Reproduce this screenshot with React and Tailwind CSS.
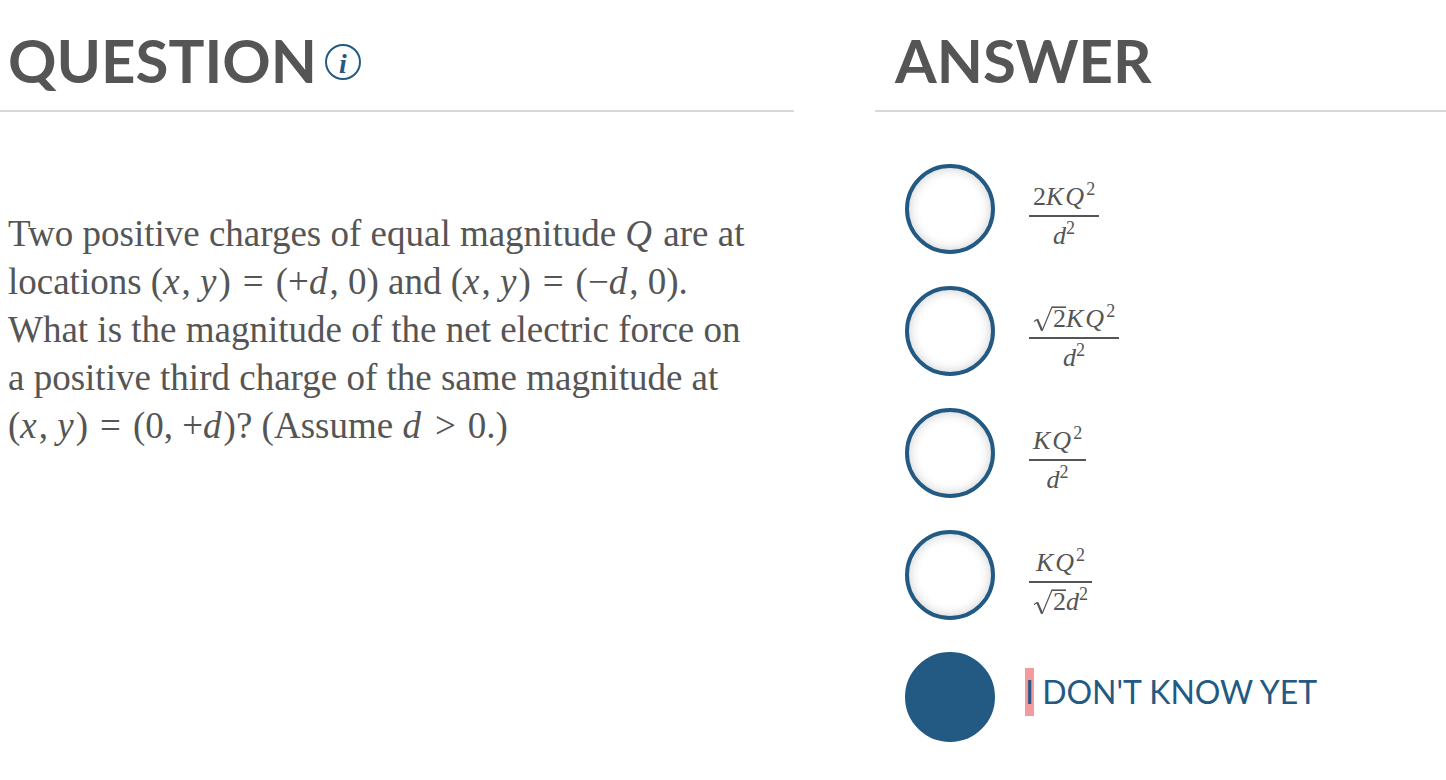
import { useState } from 'react';

const Var = ({ children }) => <i className="mr-0.5">{children}</i>;

const Rel = ({ children }) => <span className="mx-3">{children}</span>;

const Squared = () => <span className="relative bottom-2.5 text-lg leading-none">2</span>;

const RootTwo = () => (
  <span className="relative inline-block pl-5">
    <svg viewBox="0 0 33 26" className="absolute left-0 top-1 h-[26px] w-[33px]" fill="none" stroke="currentColor" aria-hidden="true">
      <path d="M1 15.5 4.5 13.2" strokeWidth="1.2" />
      <path d="M4.3 13.4 9 24.5" strokeWidth="2.2" />
      <path d="M9 25 19 1" strokeWidth="1.2" />
      <path d="M18.6 1.2H33" strokeWidth="1.6" />
    </svg>
    2
  </span>
);

const KQSquared = () => (
  <>
    <Var>K</Var>
    <Var>Q</Var>
    <Squared />
  </>
);

const DSquared = () => (
  <>
    <i>d</i>
    <Squared />
  </>
);

const Fraction = ({ top, bottom }) => (
  <span className="ml-1 flex flex-col text-center font-['Liberation_Serif',serif] text-[26px] leading-[34px] text-[#555]">
    <span className="flex items-baseline justify-center border-b-2 border-[#555] px-1 pb-px">{top}</span>
    <span className="flex items-baseline justify-center px-1 pt-0.5">{bottom}</span>
  </span>
);

const answers = [
  { id: 'a', label: <Fraction top={<>2<KQSquared /></>} bottom={<DSquared />} /> },
  { id: 'b', label: <Fraction top={<><RootTwo /><KQSquared /></>} bottom={<DSquared />} /> },
  { id: 'c', label: <Fraction top={<KQSquared />} bottom={<DSquared />} /> },
  { id: 'd', label: <Fraction top={<KQSquared />} bottom={<><RootTwo /><DSquared /></>} /> },
  {
    id: 'unknown',
    label: (
      <span className="text-[32px] leading-[48px] text-[#235a83]">
        <mark className="inline-block bg-[#f49a9e] text-[#235a83]">I</mark> DON'T KNOW YET
      </span>
    ),
  },
];

const Heading = ({ children, id, className }) => (
  <h2 id={id} className={`flex items-center gap-2 border-b-2 border-[#d8d8d8] pt-6 pb-3.5 text-[60px] leading-[72px] font-bold ${className}`}>
    {children}
  </h2>
);

const App = () => {
  const [selected, setSelected] = useState('unknown');

  return (
    <main className="grid min-h-screen grid-cols-[794fr_571fr] gap-[81px] bg-white font-[Lato,sans-serif] text-[#555]">
      <section>
        <Heading className="pl-2">
          QUESTION
          <button
            type="button"
            aria-label="Question information"
            className="mt-1 flex size-9 items-center justify-center rounded-full border-2 border-[#235a83] pt-1 font-['Liberation_Serif',serif] text-[28px] leading-none font-bold text-[#235a83] italic"
          >
            i
          </button>
        </Heading>

        <p className="pt-[98px] pl-2 font-['Liberation_Serif',serif] text-[37px] leading-[48px] whitespace-nowrap">
          Two positive charges of equal magnitude <Var>Q</Var> are at
          <br />
          locations (<Var>x</Var>, <Var>y</Var>)<Rel>=</Rel>(+<Var>d</Var>, 0) and (<Var>x</Var>, <Var>y</Var>)<Rel>=</Rel>(−<Var>d</Var>, 0).
          <br />
          What is the magnitude of the net electric force on
          <br />
          a positive third charge of the same magnitude at
          <br />
          (<Var>x</Var>, <Var>y</Var>)<Rel>=</Rel>(0, +<Var>d</Var>)? (Assume <Var>d</Var><Rel>&gt;</Rel>0.)
        </p>
      </section>

      <section>
        <Heading id="answer-heading" className="pl-5">ANSWER</Heading>

        <fieldset aria-labelledby="answer-heading" className="flex flex-col gap-8 pt-13 pl-[30px]">
          {answers.map(({ id, label }) => (
            <label key={id} className="flex h-[90px] cursor-pointer items-start gap-[30px]">
              <input
                type="radio"
                name="answer"
                value={id}
                checked={selected === id}
                onChange={() => setSelected(id)}
                className="size-[90px] shrink-0 appearance-none rounded-full border-4 border-[#235a83] bg-white shadow-[inset_0_0_12px_rgba(0,0,0,0.2)] checked:bg-[#235a83] checked:shadow-none"
              />
              <span className="pt-4">{label}</span>
            </label>
          ))}
        </fieldset>
      </section>
    </main>
  );
};

export default App;
